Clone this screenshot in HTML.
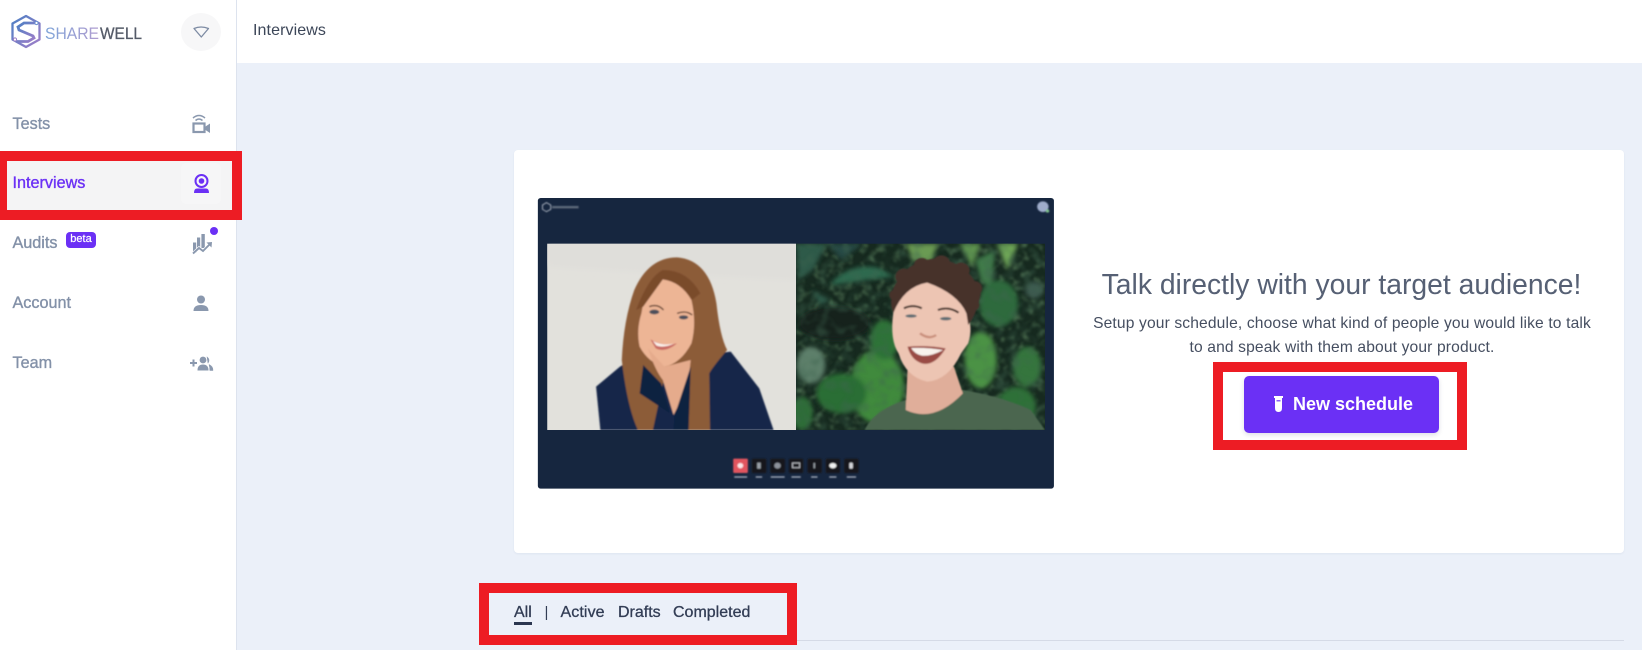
<!DOCTYPE html>
<html>
<head>
<meta charset="utf-8">
<style>
html,body{margin:0;padding:0;width:1642px;height:650px;overflow:hidden;background:#ebf0f9;font-family:"Liberation Sans",sans-serif}
.a{position:absolute;white-space:nowrap}
.r{position:absolute;border-style:solid;border-color:#ed1c24;box-sizing:border-box}
.nav{position:absolute;left:12.5px;font-size:16.2px;color:#8391a8;white-space:nowrap;-webkit-text-stroke:.35px #8391a8;line-height:20px}
.t{font-size:16px;line-height:20px;color:#323d55;-webkit-text-stroke:.3px #323d55;top:603px}
svg{position:absolute;overflow:visible}
</style>
</head>
<body>
<!-- sidebar -->
<div class="a" style="left:0;top:0;width:236px;height:650px;background:#fff;border-right:1px solid #dde3ee"></div>
<!-- header -->
<div class="a" style="left:237px;top:0;width:1405px;height:63px;background:#fff"></div>
<div class="a" style="left:253px;top:21px;font-size:16px;letter-spacing:.1px;line-height:20px;color:#3c4658">Interviews</div>

<!-- logo -->
<svg style="left:0;top:0" width="160" height="60" viewBox="0 0 160 60">
<defs>
<linearGradient id="lg" x1="0" y1="0" x2="1" y2="1"><stop offset="0" stop-color="#4d7fc4"/><stop offset="1" stop-color="#a07ec8"/></linearGradient>
<linearGradient id="tg" gradientUnits="userSpaceOnUse" x1="45" y1="0" x2="100" y2="0"><stop offset="0" stop-color="#7ea4d8"/><stop offset="1" stop-color="#b09cd0"/></linearGradient>
</defs>
<path d="M26 16 L39.5 23.5 L39.5 39.5 L26 47 L12.5 39.5 L12.5 23.5 Z" fill="none" stroke="url(#lg)" stroke-width="2.3" stroke-linejoin="round"/>
<path d="M35 23 L24 23 L18 27 L19 30 L33 36 L34 38 L28 41.5 L17 41.5" fill="none" stroke="url(#lg)" stroke-width="2.8"/>
<circle cx="36.5" cy="23" r="1.6" fill="#fff" stroke="#6b8ed0"/><circle cx="15" cy="39.5" r="1.6" fill="#fff" stroke="#9a7cc6"/>
<text x="45" y="39" font-family="Liberation Sans" font-size="16.5" fill="url(#tg)" textLength="54" lengthAdjust="spacingAndGlyphs">SHARE</text>
<text x="100" y="39" font-family="Liberation Sans" font-size="16.5" fill="#555b68" stroke="#555b68" stroke-width=".3" textLength="42" lengthAdjust="spacingAndGlyphs">WELL</text>
</svg>
<div class="a" style="left:181px;top:13px;width:40px;height:38px;border-radius:50%;background:#f7f7f8"></div>
<svg style="left:193px;top:26px" width="17" height="12" viewBox="0 0 17 12"><path d="M1 2.5 Q8 -0.5 15.5 2.5 L8.3 11 Z" fill="none" stroke="#7d8ba3" stroke-width="1.3" stroke-linejoin="round"/></svg>

<!-- nav -->
<div class="nav" style="top:114px">Tests</div>
<svg style="left:191px;top:113px" width="20" height="21" viewBox="0 0 20 21" fill="none" stroke="#8a98ae">
<path d="M2 5 Q8 0 14 5" stroke-width="1.5"/><path d="M4.5 7.5 Q8 4.5 11.5 7.5" stroke-width="1.5"/>
<rect x="2.5" y="10.5" width="11" height="8.5" stroke-width="2.2"/><path d="M14.5 13.5 L19 10.5 V20 L14.5 17Z" fill="#8a98ae" stroke="none"/></svg>

<div class="a" style="left:7px;top:161px;width:225px;height:49px;background:#f4f4f5"></div>
<div class="a" style="left:181px;top:163px;width:40px;height:41px;background:#f6f6f7;border-radius:5px"></div>
<div class="r" style="left:0;top:151px;width:242px;height:69px;border-width:10px 10px 10px 7px"></div>
<div class="nav" style="top:173px;color:#6b30f5;-webkit-text-stroke:.35px #6b30f5">Interviews</div>
<svg style="left:193px;top:174px" width="17" height="20" viewBox="0 0 17 20">
<circle cx="8.5" cy="7" r="6" fill="none" stroke="#6b30f5" stroke-width="2"/><circle cx="8.5" cy="7" r="2.8" fill="#6b30f5"/>
<path d="M1 19 Q1 14.5 4 14.5 H13 Q16 14.5 16 19 Z" fill="#6b30f5"/></svg>

<div class="nav" style="top:233px">Audits</div>
<div class="a" style="left:66px;top:232px;width:30px;height:16px;background:#6b30f5;border-radius:4px;color:#fff;font-size:11px;line-height:15px;text-align:center;-webkit-text-stroke:.2px #fff">beta</div>
<svg style="left:191px;top:230px" width="28" height="26" viewBox="0 0 28 26">
<rect x="2" y="12.5" width="3.2" height="10.5" fill="#8a98ae"/><rect x="6" y="7.5" width="3.2" height="11.5" fill="#8a98ae"/><rect x="10.4" y="4" width="3.4" height="14" fill="#8a98ae"/>
<path d="M2 23.5 L8 18 L12 21 L19 14" fill="none" stroke="#fff" stroke-width="3.2"/>
<path d="M2 23.5 L8 18 L12 21 L19 14" fill="none" stroke="#8a98ae" stroke-width="1.9"/><path d="M15.5 12.5 L21 12 L20.5 17.5Z" fill="#8a98ae"/>
<circle cx="23" cy="1" r="4" fill="#6b30f5"/></svg>

<div class="nav" style="top:293px">Account</div>
<svg style="left:193px;top:295px" width="16" height="17" viewBox="0 0 16 17"><circle cx="8" cy="4.5" r="4" fill="#8a98ae"/><path d="M0.5 16 Q0.5 10 8 10 Q15.5 10 15.5 16Z" fill="#8a98ae"/></svg>

<div class="nav" style="top:353px">Team</div>
<svg style="left:189px;top:356px" width="24" height="16" viewBox="0 0 24 16">
<path d="M1 7 H8 M4.5 3.5 V10.5" stroke="#8a98ae" stroke-width="2" fill="none"/>
<circle cx="14" cy="4" r="3.4" fill="#8a98ae"/><path d="M8.5 14.5 Q8.5 8.5 14 8.5 Q19.5 8.5 19.5 14.5Z" fill="#8a98ae"/>
<path d="M18 0.8 Q21.5 3.5 19 7.2 Q18.5 4 18 0.8Z M20 8.5 Q24 10 24 14.5 H20.8 Q20.8 11 20 8.5Z" fill="#8a98ae" stroke="#8a98ae" stroke-width=".5"/></svg>

<!-- card -->
<div class="a" style="left:514px;top:150px;width:1110px;height:403px;background:#fff;border-radius:4px;box-shadow:0 1px 2px rgba(40,60,110,.06)"></div>

<!-- video mock -->
<svg style="left:520px;top:180px" width="560" height="320" viewBox="0 0 1568 960" preserveAspectRatio="none">
<defs>
<filter id="b1" x="-10%" y="-10%" width="120%" height="120%"><feGaussianBlur stdDeviation="2.2"/></filter>
<filter id="b2" x="-10%" y="-10%" width="120%" height="120%"><feGaussianBlur stdDeviation="7"/></filter>
<filter id="b3" x="-10%" y="-10%" width="120%" height="120%"><feGaussianBlur stdDeviation="9"/></filter>
<filter id="leaf" x="0" y="0" width="100%" height="100%"><feTurbulence type="fractalNoise" baseFrequency=".03" numOctaves="2" seed="7"/><feColorMatrix values="0 0 0 0 .05  0 0 0 0 .13  0 0 0 0 .08  3 0 0 0 -1.4"/><feGaussianBlur stdDeviation="3"/></filter>
<filter id="leaf2" x="0" y="0" width="100%" height="100%"><feTurbulence type="fractalNoise" baseFrequency=".045" numOctaves="2" seed="21"/><feColorMatrix values="0 0 0 0 .3  0 0 0 0 .58  0 0 0 0 .28  3 0 0 0 -1.5"/><feGaussianBlur stdDeviation="3"/></filter>
<clipPath id="cl"><rect x="76" y="191" width="697" height="559"/></clipPath>
<clipPath id="cr"><rect x="773" y="191" width="697" height="559"/></clipPath>
</defs>
<rect x="50" y="54" width="1445" height="872" rx="8" fill="#16263f"/>
<!-- woman -->
<g clip-path="url(#cl)">
<rect x="76" y="191" width="697" height="559" fill="#e2e1dc"/>
<path d="M76 191H773V300L560 290 76 260Z" fill="#dfdeda" filter="url(#b3)"/>
<g filter="url(#b1)">
<path d="M213 620 L280 560 L340 520 L480 530 L590 515 L670 625 L710 750 H225Z" fill="#13274a"/>
<path d="M320 330 Q360 232 440 232 Q530 240 550 370 Q560 470 580 510 Q540 560 530 580 L532 750 H470 L475 590 L400 610 L372 750 H330 Q300 680 285 540 Q290 420 320 330Z" fill="#8c5b38"/>
<path d="M340 400 Q350 320 400 298 Q450 305 480 360 Q495 430 480 490 Q450 550 405 560 Q360 550 335 500 Q325 450 340 400Z" fill="#edb595"/>
<path d="M358 505 Q378 570 400 600 L430 705 L470 620 L478 540 L405 560Z" fill="#e5ab8c"/>
<path d="M345 555 L335 640 L420 700 L395 610 Z" fill="#0f2040"/>
<path d="M478 560 L432 710 L430 750 H472 Z" fill="#0f2040"/>
<path d="M400 298 Q450 305 482 360 L505 340 Q470 270 400 270 Q360 290 325 390 L345 380Z" fill="#7a4c2c"/>
<path d="M362 380 Q385 370 402 390 M440 400 Q465 390 482 405" stroke="#5b3a2a" stroke-width="4" fill="none"/>
<ellipse cx="376" cy="396" rx="14" ry="7" fill="#4d4f5c"/><ellipse cx="458" cy="412" rx="13" ry="6" fill="#4d4f5c"/>
<path d="M365 478 Q400 500 440 490 Q405 520 380 505Z" fill="#c96a63"/><path d="M372 483 Q400 498 432 491 Q402 505 382 497Z" fill="#fbf1ea"/>
</g>
</g>
<!-- man -->
<g clip-path="url(#cr)">
<rect x="773" y="191" width="697" height="559" fill="#16291f"/>
<rect x="773" y="191" width="697" height="559" filter="url(#leaf2)" opacity=".4"/>
<g filter="url(#b2)">
<path d="M1080 191 H1170 L1150 250 L1100 240Z" fill="#6a9a52"/>
<path d="M1230 191 H1290 L1265 260Z" fill="#5f9450"/>
<path d="M1335 191 H1395 L1365 270Z" fill="#6ea556"/>
<path d="M1275 240 L1330 210 L1320 330 L1290 300Z" fill="#3f7c48"/>
<path d="M870 310 Q920 250 1000 262 L1050 290 Q960 300 880 315Z" fill="#2f6a50"/>
<path d="M773 191 H860 L820 270 L780 300Z" fill="#2d5a48"/>
<path d="M860 191 H960 L900 240Z" fill="#264a44"/>
<path d="M815 330 L870 360 L840 375Z" fill="#2f5a48"/>
<ellipse cx="815" cy="555" rx="40" ry="55" fill="#5d7f6b"/>
<ellipse cx="1000" cy="620" rx="75" ry="110" fill="#3f8a3c"/>
<ellipse cx="900" cy="640" rx="70" ry="60" fill="#2c6e35"/>
<ellipse cx="1020" cy="480" rx="40" ry="60" fill="#2f7338"/>
<ellipse cx="1290" cy="540" rx="45" ry="85" fill="#4c9245"/>
<ellipse cx="1340" cy="370" rx="55" ry="70" fill="#2f6a3c"/>
<ellipse cx="1420" cy="560" rx="40" ry="60" fill="#35743c"/>
<ellipse cx="1390" cy="680" rx="55" ry="60" fill="#2d6f38"/>
<ellipse cx="790" cy="700" rx="30" ry="50" fill="#2f6d38"/>
<ellipse cx="1440" cy="330" rx="25" ry="25" fill="#3d5a50"/>
<ellipse cx="880" cy="430" rx="100" ry="50" fill="#12201a"/>
</g>
<rect x="773" y="191" width="697" height="559" filter="url(#leaf)" opacity=".45"/>
<g filter="url(#b1)">
<path d="M965 750 Q990 690 1080 660 L1240 630 Q1350 650 1430 690 L1470 750Z" fill="#4b6650"/>
<path d="M1085 570 L1080 690 Q1160 730 1240 640 L1215 560Z" fill="#e0ae9a"/>
<path d="M1045 400 Q1060 320 1140 305 Q1230 310 1250 400 Q1270 440 1255 490 L1235 520 Q1200 600 1140 605 Q1080 590 1060 520 Q1035 480 1045 400Z" fill="#edc5b3"/>
<path d="M1040 380 Q1035 330 1060 300 Q1090 240 1170 235 Q1260 250 1290 340 Q1280 400 1255 435 L1250 400 Q1225 340 1140 308 Q1075 320 1045 400Z" fill="#46302a"/>
<g fill="#46302a"><circle cx="1075" cy="290" r="24"/><circle cx="1125" cy="256" r="22"/><circle cx="1180" cy="250" r="24"/><circle cx="1235" cy="272" r="24"/><circle cx="1272" cy="325" r="22"/><circle cx="1268" cy="375" r="18"/><circle cx="1050" cy="345" r="16"/></g>
<path d="M1075 385 Q1100 372 1125 385 M1170 390 Q1200 378 1228 398" stroke="#3a2a24" stroke-width="6" fill="none"/>
<ellipse cx="1095" cy="408" rx="16" ry="5" fill="#5f6c72"/><ellipse cx="1192" cy="416" rx="16" ry="5" fill="#5f6c72"/>
<path d="M1085 500 Q1140 495 1192 505 Q1160 560 1125 550 Q1095 540 1085 500Z" fill="#9a4b45"/>
<path d="M1095 504 Q1140 502 1185 510 Q1150 530 1125 527 Q1105 522 1095 504Z" fill="#f8f2ec"/>
<path d="M1120 460 Q1145 480 1165 465" stroke="#c98f7c" stroke-width="7" fill="none"/>
</g>
</g>
<!-- mini logo + avatar -->
<g filter="url(#b1)">
<path d="M74 68 L86 75 V88 L74 95 L63 88 V75Z" fill="none" stroke="#b9c0cc" stroke-width="2.5"/>
<rect x="90" y="78" width="74" height="7" fill="#5f6a7c"/>
<circle cx="1464" cy="80" r="16" fill="#9eaccb"/><circle cx="1477" cy="93" r="5" fill="#7ec08c"/>
</g>
<!-- toolbar -->
<g filter="url(#b1)">
<rect x="597" y="836" width="41" height="43" rx="3" fill="#e2555f"/>
<rect x="649" y="836" width="41" height="43" rx="3" fill="#16181e"/>
<rect x="701" y="836" width="41" height="43" rx="3" fill="#16181e"/>
<rect x="753" y="836" width="40" height="43" rx="3" fill="#16181e"/>
<rect x="805" y="836" width="40" height="43" rx="3" fill="#16181e"/>
<rect x="856" y="836" width="40" height="43" rx="3" fill="#16181e"/>
<rect x="908" y="836" width="40" height="43" rx="3" fill="#16181e"/>
<circle cx="617" cy="857" r="8" fill="#fff" opacity=".85"/>
<rect x="664" y="848" width="10" height="18" fill="#9aa0a8"/>
<circle cx="721" cy="857" r="9" fill="#8d929b"/>
<rect x="763" y="849" width="20" height="14" fill="none" stroke="#cfd2d8" stroke-width="2.5"/>
<rect x="822" y="849" width="4" height="16" fill="#9aa0a8"/>
<ellipse cx="876" cy="857" rx="10" ry="8" fill="#f0f0f0"/>
<rect x="922" y="848" width="10" height="18" rx="4" fill="#d5d7db"/>
<g fill="#aab2c0"><rect x="600" y="889" width="36" height="4"/><rect x="660" y="889" width="18" height="4"/><rect x="702" y="889" width="39" height="4"/><rect x="760" y="889" width="26" height="4"/><rect x="815" y="889" width="18" height="4"/><rect x="866" y="889" width="20" height="4"/><rect x="915" y="889" width="26" height="4"/></g>
</g>
</svg>

<!-- card copy -->
<div class="a" id="h" style="left:1092px;top:266px;width:499px;text-align:center;font-size:28.3px;line-height:36px;color:#566074">Talk directly with your target audience!</div>
<div class="a" style="left:1072px;top:312px;width:540px;text-align:center;font-size:15.6px;letter-spacing:.14px;line-height:24px;color:#454e60">Setup your schedule, choose what kind of people you would like to talk<br>to and speak with them about your product.</div>

<div class="a" style="left:1244px;top:376px;width:195px;height:57px;border-radius:5px;background:#6b30f5;box-shadow:0 2px 5px rgba(40,40,90,.15)"></div>
<svg style="left:1273px;top:396px" width="11" height="17" viewBox="0 0 11 17"><path d="M2 1 H9 V12 Q9 16 5.5 16 Q2 16 2 12Z" fill="#fff"/><rect x="1" y="0" width="9" height="2" fill="#fff"/><rect x="3.5" y="4" width="4" height="1.5" fill="#8c5cf7"/></svg>
<div class="a" style="left:1293px;top:392px;font-size:18px;line-height:24px;color:#fff;font-weight:bold">New schedule</div>
<div class="r" style="left:1213px;top:362px;width:254px;height:88px;border-width:10px"></div>

<!-- tabs -->
<div class="a" style="left:797px;top:640px;width:827px;height:1px;background:#d5dae6"></div>
<div class="a" style="left:489px;top:593px;width:298px;height:42px;background:#ebf0f9"></div>
<div class="a t" style="left:514px">All</div>
<div class="a" style="left:514px;top:622px;width:18px;height:3px;background:#2b3650"></div>
<div class="a" style="left:544.5px;top:603px;font-size:15px;line-height:20px;color:#323d55">|</div>
<div class="a t" style="left:560.5px;letter-spacing:.1px">Active</div>
<div class="a t" style="left:618px">Drafts</div>
<div class="a t" style="left:673px">Completed</div>
<div class="r" style="left:479px;top:583px;width:318px;height:62px;border-width:10px"></div>
</body>
</html>
